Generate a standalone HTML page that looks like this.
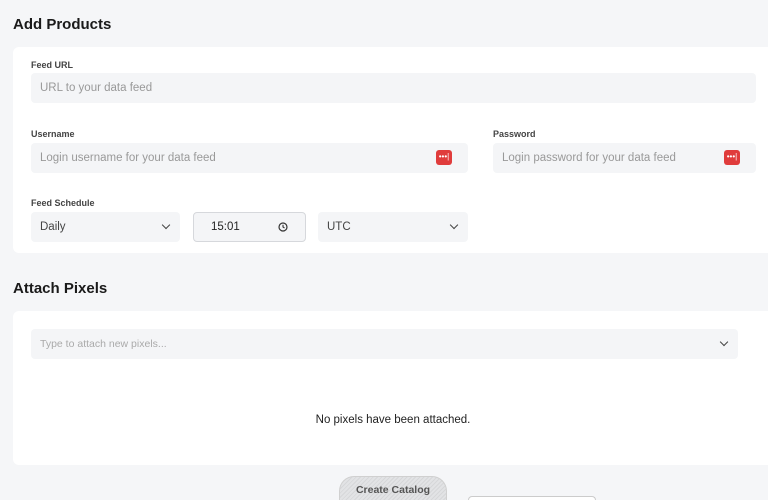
<!DOCTYPE html><html><head><style>
html,body{margin:0;width:768px;height:500px;overflow:hidden}
body{background:#f5f6f8;font-family:"Liberation Sans",sans-serif;position:relative;color:#222}
.a{position:absolute}
h2{position:absolute;margin:0;font-size:15px;font-weight:bold;color:#1a1a1a}
.card{position:absolute;background:#fff;border-radius:6px}
.lbl{position:absolute;font-size:9px;font-weight:bold;color:#444}
.in{position:absolute;background:#f4f5f7;border-radius:4px;height:30px;font-size:11.5px;color:#999;line-height:31px;padding-left:9px;box-sizing:border-box}
.key{position:absolute;width:16px;height:15px;background:#e03c3c;border-radius:3px;top:7px;color:#fff;font-size:8px;line-height:14px;text-align:center}
.chev{position:absolute;top:10px;width:5px;height:5px;border-right:1.3px solid #444;border-bottom:1.3px solid #444;transform:rotate(45deg)}
</style></head><body>
<h2 style="left:13px;top:16px">Add Products</h2>
<div class="card" style="left:13px;top:47px;width:770px;height:206px"></div>
<div class="lbl" style="left:31px;top:60px">Feed URL</div>
<div class="in" style="left:31px;top:73px;width:725px">URL to your data feed</div>
<div class="lbl" style="left:31px;top:129px">Username</div>
<div class="in" style="left:31px;top:143px;width:437px">Login username for your data feed<div class="key" style="left:405px">•••|</div></div>
<div class="lbl" style="left:493px;top:129px">Password</div>
<div class="in" style="left:493px;top:143px;width:263px">Login password for your data feed<div class="key" style="left:231px">•••|</div></div>
<div class="lbl" style="left:31px;top:198px">Feed Schedule</div>
<div class="in" style="left:31px;top:212px;width:149px;color:#444">Daily<div class="chev" style="left:132px"></div></div>
<div class="in" style="left:193px;top:212px;width:113px;color:#222;border:1px solid #d6d8dc;padding-left:17px;line-height:29px">15:01<svg class="a" style="left:84px;top:9px" width="10" height="10" viewBox="0 0 10 10"><circle cx="5" cy="5" r="4" fill="none" stroke="#333" stroke-width="1.2"/><path d="M5 2.7V5l1.5 1" fill="none" stroke="#333" stroke-width="1.1"/></svg></div>
<div class="in" style="left:318px;top:212px;width:150px;color:#444">UTC<div class="chev" style="left:133px"></div></div>
<h2 style="left:13px;top:280px">Attach Pixels</h2>
<div class="card" style="left:13px;top:311px;width:770px;height:154px"></div>
<div class="in" style="left:31px;top:329px;width:707px;color:#aaa;font-size:10.5px">Type to attach new pixels...<div class="chev" style="left:690px"></div></div>
<div class="a" style="left:0;width:786px;top:414px;text-align:center;font-size:11.5px;color:#222">No pixels have been attached.</div>
<div class="a" style="left:339px;top:476px;width:108px;height:24px;border-radius:15px 15px 0 0;background:repeating-linear-gradient(135deg,#e2e3e5 0 2px,#d6d7d9 2px 3px);border:1px solid #d0d0d0;border-bottom:none;box-sizing:border-box;text-align:center;font-size:10.5px;font-weight:bold;color:#555;line-height:26px">Create Catalog</div>
<div class="a" style="left:468px;top:496px;width:126px;height:4px;border:1px solid #ccc;border-bottom:none;border-radius:4px 4px 0 0;background:#fff"></div>
</body></html>
